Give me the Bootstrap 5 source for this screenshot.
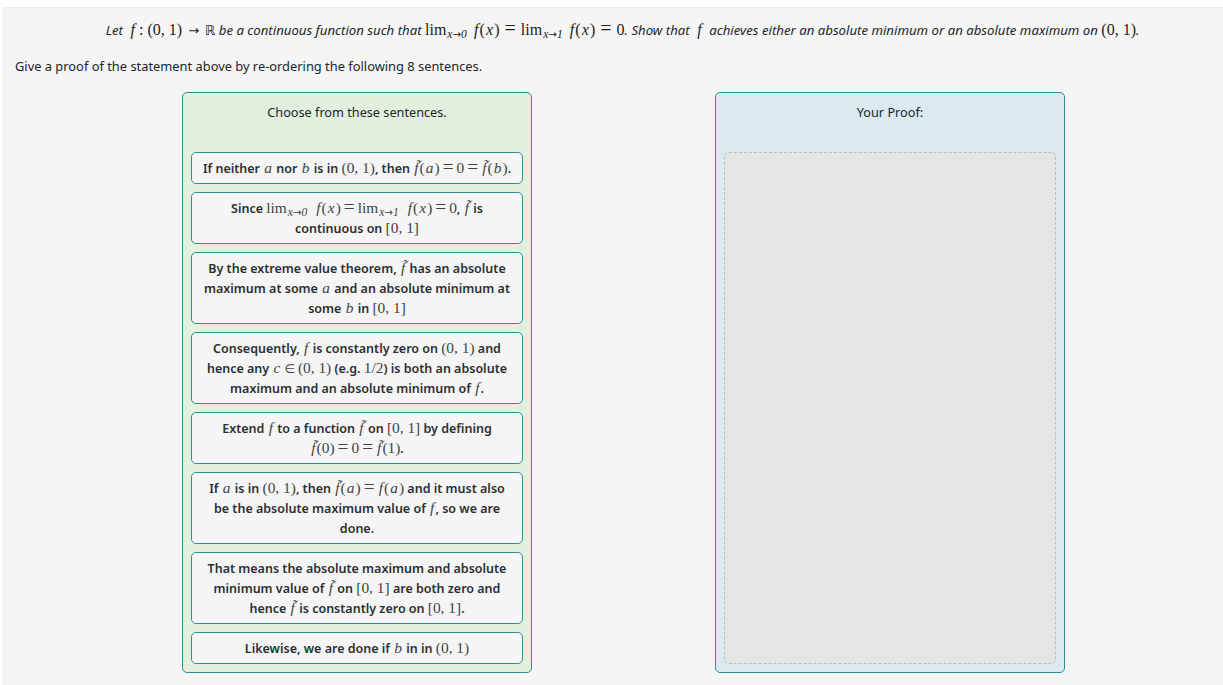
<!DOCTYPE html>
<html lang="en"><head><meta charset="utf-8"><title>Proof</title>
<link href="https://cdn.jsdelivr.net/npm/bootstrap@5.3.0/dist/css/bootstrap.min.css" rel="stylesheet">
<style>
html,body{height:685px;overflow:hidden}
body{background:#fff;font-family:"Noto Sans","Open Sans",sans-serif;font-size:13px;color:#212529;padding:7px 0 0 2px}
.panel-wrap{background:#f5f5f5;height:678px;padding-left:21px;border-top:1px solid #ececec}
.stmt{font-style:italic;text-align:center;line-height:20px;padding-top:12px;white-space:nowrap;font-size:13.2px;margin-left:-1px}
.intro{margin:16px 0 0 -8px;line-height:20px;font-size:12.87px;height:36px}
.boards{gap:183px;width:883px;margin-left:159px}
.bucket{width:350px;height:581px;border:1px solid #2f8f8f;border-radius:5px;padding:9px 8px 8px}
.bucket-src{background:#e2efdc}
.bucket-dst{background:#dbe9f0}
.bucket-title{text-align:center;line-height:20px;height:50px;font-size:12.7px}
.sent{background:#f5f5f5;border:1px solid #2f8f8f;border-radius:5px;padding:6px 4px 4px;line-height:20px;text-align:center;font-weight:600;font-size:12.5px;color:#2b2f33}
.slots{gap:8px}
.drop{height:512px;background:#e5e5e5;border:1px dashed #bdbdbd;border-radius:5px}
.mth{font-family:"Liberation Serif",serif;font-weight:400;font-style:normal;font-size:15.4px;white-space:nowrap;color:#444;line-height:0}
.stmt .mth{color:#222;font-size:16px}
.mth i{font-style:italic;padding:0 .07em}
.mth sub{font-size:11.5px;bottom:-.3em;font-style:italic;margin:0 2px 0 1px;line-height:0}
.sent sub{margin-right:4px}
.arw{font-family:"DejaVu Sans",sans-serif;font-style:normal;font-size:.9em;line-height:0}
.arw-lg{font-family:"DejaVu Sans",sans-serif;font-size:13px;margin:0 6px;line-height:0}
.elm{font-family:"DejaVu Sans",sans-serif;font-size:12px;margin:0 3px;line-height:0}
.eqs{margin:0 5px;font-size:1.25em;line-height:0}
.sent .eqs{margin:0 3px}
.dbl{font-family:"DejaVu Sans",sans-serif;font-size:13px;line-height:0}
.varsp{margin:0 3px}
</style></head>
<body>
<div class="panel-wrap">
<p class="stmt mb-0">Let <span class="mth"><i class="varsp">f</i>: (0, 1)<span class="arw-lg">→</span><span class="dbl">ℝ</span></span> be a continuous function such that <span class="mth">lim<sub>x<span class="arw">→</span>0</sub> <i>f</i>(<i>x</i>)<span class="eqs">=</span>lim<sub>x<span class="arw">→</span>1</sub> <i>f</i>(<i>x</i>)<span class="eqs">=</span>0</span>. Show that <span class="mth"><i class="varsp">f</i></span> achieves either an absolute minimum or an absolute maximum on <span class="mth">(0, 1)</span>.</p>
<p class="intro mb-0">Give a proof of the statement above by re-ordering the following 8 sentences.</p>
<div class="boards d-flex align-items-start">
<div class="bucket bucket-src">
<div class="bucket-title">Choose from these sentences.</div>
<div class="slots d-flex flex-column">
<div class="sent">If neither <span class="mth"><i>a</i></span> nor <span class="mth"><i>b</i></span> is in <span class="mth">(0, 1)</span>, then <span class="mth"><i>f̃</i>(<i>a</i>)<span class="eqs">=</span>0<span class="eqs">=</span><i>f̃</i>(<i>b</i>)</span>.</div>
<div class="sent">Since <span class="mth">lim<sub>x<span class="arw">→</span>0</sub> <i>f</i>(<i>x</i>)<span class="eqs">=</span>lim<sub>x<span class="arw">→</span>1</sub> <i>f</i>(<i>x</i>)<span class="eqs">=</span>0</span>, <span class="mth"><i>f̃</i></span> is<br>continuous on <span class="mth">[0, 1]</span></div>
<div class="sent">By the extreme value theorem, <span class="mth"><i>f̃</i></span> has an absolute<br>maximum at some <span class="mth"><i>a</i></span> and an absolute minimum at<br>some <span class="mth"><i>b</i></span> in <span class="mth">[0, 1]</span></div>
<div class="sent">Consequently, <span class="mth"><i>f</i></span> is constantly zero on <span class="mth">(0, 1)</span> and<br>hence any <span class="mth"><i>c</i><span class="elm">∈</span>(0, 1)</span> (e.g. <span class="mth">1/2</span>) is both an absolute<br>maximum and an absolute minimum of <span class="mth"><i>f</i></span>.</div>
<div class="sent">Extend <span class="mth"><i>f</i></span> to a function <span class="mth"><i>f̃</i></span> on <span class="mth">[0, 1]</span> by defining<br><span class="mth"><i>f̃</i>(0)<span class="eqs">=</span>0<span class="eqs">=</span><i>f̃</i>(1)</span>.</div>
<div class="sent">If <span class="mth"><i>a</i></span> is in <span class="mth">(0, 1)</span>, then <span class="mth"><i>f̃</i>(<i>a</i>)<span class="eqs">=</span><i>f</i>(<i>a</i>)</span> and it must also<br>be the absolute maximum value of <span class="mth"><i>f</i></span>, so we are<br>done.</div>
<div class="sent">That means the absolute maximum and absolute<br>minimum value of <span class="mth"><i>f̃</i></span> on <span class="mth">[0, 1]</span> are both zero and<br>hence <span class="mth"><i>f̃</i></span> is constantly zero on <span class="mth">[0, 1]</span>.</div>
<div class="sent">Likewise, we are done if <span class="mth"><i>b</i></span> in in <span class="mth">(0, 1)</span></div>
</div>
</div>
<div class="bucket bucket-dst">
<div class="bucket-title">Your Proof:</div>
<div class="drop"></div>
</div>
</div>
</div>
<script src="https://cdn.jsdelivr.net/npm/bootstrap@5.3.0/dist/js/bootstrap.bundle.min.js"></script>
</body></html>
